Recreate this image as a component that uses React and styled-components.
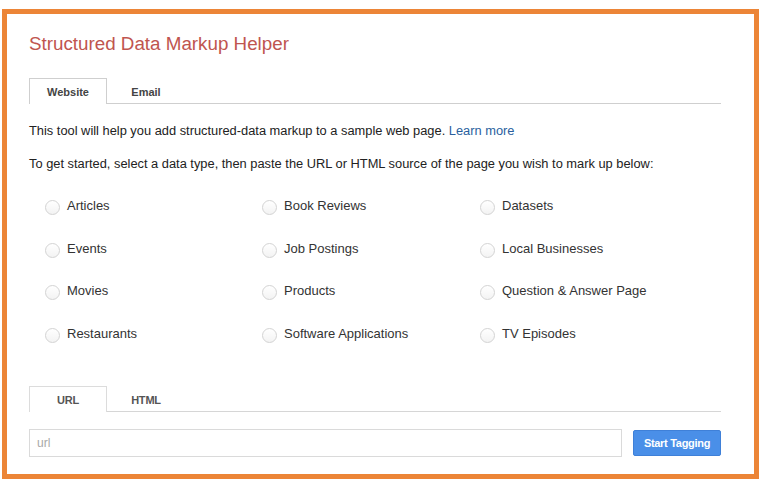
import React from 'react'
import styled, { createGlobalStyle } from 'styled-components'

const GlobalStyle = createGlobalStyle`
    html, body {
        margin: 0;
        padding: 0;
        background: #ffffff;
        font-family: "Liberation Sans", Arial, sans-serif;
    }
`;

const dataTypes = [
    'Articles', 'Book Reviews', 'Datasets',
    'Events', 'Job Postings', 'Local Businesses',
    'Movies', 'Products', 'Question & Answer Page',
    'Restaurants', 'Software Applications', 'TV Episodes',
]

function App() {
    return (
        <>
            <GlobalStyle />
            <Frame>
                <Title>Structured Data Markup Helper</Title>
                <TabBar>
                    <Tab active>Website</Tab>
                    <Tab>Email</Tab>
                </TabBar>
                <Intro>
                    This tool will help you add structured-data markup to a sample web page. <a href="#">Learn more</a>
                </Intro>
                <Intro>
                    To get started, select a data type, then paste the URL or HTML source of the page you wish to mark up below:
                </Intro>
                <TypeGrid>
                    {dataTypes.map((type) => (
                        <RadioRow key={type}>
                            <Radio />
                            <span>{type}</span>
                        </RadioRow>
                    ))}
                </TypeGrid>
                <SourceTabs>
                    <SourceTab active>URL</SourceTab>
                    <SourceTab>HTML</SourceTab>
                </SourceTabs>
                <UrlRow>
                    <UrlInput placeholder="url" />
                    <TagButton>Start Tagging</TagButton>
                </UrlRow>
            </Frame>
        </>
    )
}

const Frame = styled.div`
    box-sizing: border-box;
    margin: 9px 0 0 2px;
    width: 757px;
    height: 470px;
    border: 5px solid #ec8537;
    padding: 19px 33px 0 22px;
    display: flex;
    flex-direction: column;
`;

const Title = styled.h1`
    margin: 0;
    font-size: 18.8px;
    font-weight: normal;
    line-height: 21px;
    color: #c0554f;
`;

const TabBar = styled.div`
    display: flex;
    margin-top: 24px;
    height: 25px;
    border-bottom: 1px solid #cfcfcf;
`;

const Tab = styled.div`
    box-sizing: border-box;
    width: 78px;
    height: 26px;
    display: flex;
    align-items: center;
    justify-content: center;
    font-size: 11px;
    font-weight: bold;
    color: #444;
    background: ${(p) => (p.active ? '#fff' : 'transparent')};
    border: 1px solid ${(p) => (p.active ? '#cfcfcf' : 'transparent')};
    border-bottom: none;
    margin-bottom: ${(p) => (p.active ? '-1px' : '0')};
    padding-top: 1px;
`;

const Intro = styled.p`
    margin: 0;
    font-size: 12.85px;
    line-height: 15px;
    color: #222;
    &:first-of-type { margin-top: 19px; }
    & + & { margin-top: 18px; }
    a {
        color: #2a5f9e;
        text-decoration: none;
    }
`;

const TypeGrid = styled.div`
    display: grid;
    grid-template-columns: 217px 218px 1fr;
    grid-auto-rows: 42.5px;
    margin-top: 27px;
    padding-left: 16px;
`;

const RadioRow = styled.label`
    display: flex;
    align-items: flex-start;
    gap: 7px;
    font-size: 13px;
    line-height: 16px;
    color: #333;
`;

const Radio = styled.span`
    box-sizing: border-box;
    flex: none;
    width: 15px;
    height: 15px;
    margin-top: 2px;
    border-radius: 50%;
    border: 1px solid #d3d3d3;
    background: linear-gradient(#ffffff, #f3f3f3);
`;

const SourceTabs = styled.div`
    display: flex;
    margin-top: 18px;
    height: 25px;
    border-bottom: 1px solid #d6d6d6;
`;

const SourceTab = styled.div`
    box-sizing: border-box;
    width: 78px;
    height: 26px;
    margin-bottom: ${(p) => (p.active ? '-1px' : '0')};
    display: flex;
    align-items: center;
    justify-content: center;
    font-size: 11px;
    font-weight: bold;
    letter-spacing: -0.2px;
    color: #555;
    background: ${(p) => (p.active ? '#fff' : 'transparent')};
    border: 1px solid ${(p) => (p.active ? '#dcdcdc' : 'transparent')};
    border-bottom: none;
`;

const UrlRow = styled.div`
    display: flex;
    align-items: center;
    gap: 11px;
    margin-top: 17px;
`;

const UrlInput = styled.input`
    box-sizing: border-box;
    flex: 1;
    height: 28px;
    border: 1px solid #dadada;
    padding: 0 7px;
    font-family: "Liberation Sans", Arial, sans-serif;
    font-size: 12px;
    outline: none;
    &::placeholder { color: #a8a8a8; }
`;

const TagButton = styled.button`
    box-sizing: border-box;
    width: 88px;
    height: 26px;
    border: 1px solid #3f80d8;
    border-radius: 2px;
    background: #4a8fe8;
    color: #fff;
    font-family: "Liberation Sans", Arial, sans-serif;
    font-size: 11px;
    font-weight: bold;
    letter-spacing: -0.3px;
    padding: 0;
`;

export default App
